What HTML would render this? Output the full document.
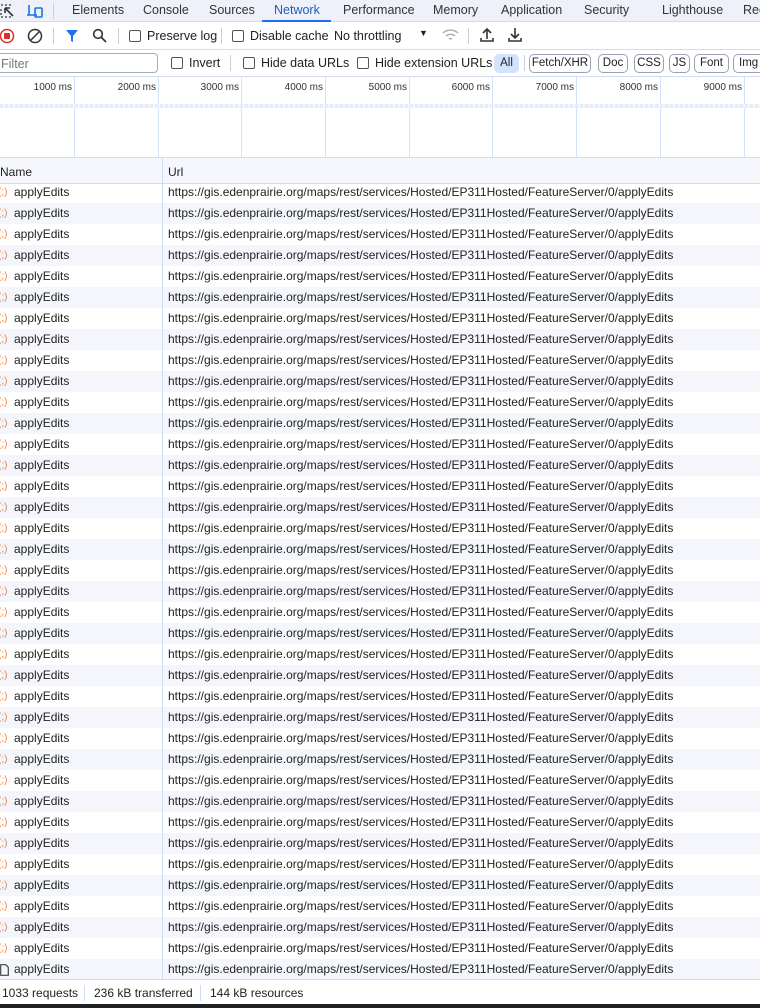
<!DOCTYPE html><html><head><style>
*{box-sizing:border-box;margin:0;padding:0}
body{width:760px;height:1008px;overflow:hidden;background:#fff;font-family:"Liberation Sans",sans-serif;font-size:12px;color:#1f1f1f;position:relative}
.abs{position:absolute}
.tabs{top:0;left:0;width:760px;height:22px;background:#eef1f9;border-bottom:1px solid #d3dcef}
.tab{position:absolute;top:3px;font-size:12.5px;color:#333}
.tb{top:22px;left:0;width:760px;height:28px;border-bottom:1px solid #d3dcef}
.cb{display:inline-block;width:12px;height:12px;border:1px solid #555;border-radius:2px;vertical-align:-2px;margin-right:6px}
.fb{top:50px;left:0;width:760px;height:27px;border-bottom:1px solid #d3dcef}
.pill{position:absolute;top:4px;height:19px;border:1px solid #9aa3b5;border-radius:5px;padding:2px 0;font-size:11.5px;color:#222;text-align:center}
.vl{position:absolute;top:77px;height:80px;width:1px;background:#d6e2fb}
.ms{position:absolute;top:82px;font-size:10px;color:#333;text-align:right;width:70px}
.hdr{top:157px;left:0;width:760px;height:27px;background:#f5f7fc;border-top:1px solid #cfdcf7;border-bottom:1px solid #cfdcf7}
.row{position:absolute;left:0;width:760px;height:21px;line-height:21px;white-space:nowrap}
.row.g{background:#f4f6fb}
.n{position:absolute;left:14px}
.u{position:absolute;left:168px}
.ic{position:absolute;left:-2px;top:0;color:#e8834a;font-size:10px}
.col{position:absolute;left:162px;top:157px;width:1px;height:822px;background:#cfdcf7}
.foot{top:979px;left:0;width:760px;height:25px;border-top:1px solid #cfdcf7;line-height:26px;font-size:12px}
</style></head><body>
<div id="rows"></div>
<div class="abs tabs">
<svg class="abs" style="left:0;top:3px" width="16" height="16"><path d="M1 2h2M5 2h2M9 2h2M1 6v2M1 10v2M1 14h2M5 14h2M9 14h2" stroke="#555" stroke-width="1.5"/><path d="M5 5l8 8M5 5h5M5 5v5" stroke="#333" stroke-width="1.6" fill="none"/></svg>
<svg class="abs" style="left:27px;top:3px" width="18" height="16"><path d="M2 2v10h8M2 12H0" stroke="#1a73e8" stroke-width="1.6" fill="none"/><rect x="8" y="5" width="7" height="9" rx="1" stroke="#1a73e8" stroke-width="1.6" fill="none"/></svg>
<div class="abs" style="left:53px;top:3px;width:1px;height:16px;background:#ccd"></div>
<span class="tab" style="left:72px">Elements</span>
<span class="tab" style="left:143px">Console</span>
<span class="tab" style="left:209px">Sources</span>
<span class="tab" style="left:274px;color:#1a5fc8">Network</span>
<div class="abs" style="left:262px;top:20px;width:69px;height:2px;background:#1a73e8"></div>
<span class="tab" style="left:343px">Performance</span>
<span class="tab" style="left:433px">Memory</span>
<span class="tab" style="left:501px">Application</span>
<span class="tab" style="left:584px">Security</span>
<span class="tab" style="left:662px">Lighthouse</span>
<span class="tab" style="left:743px">Rec</span>
</div>
<div class="abs tb">
<svg class="abs" style="left:0;top:6px" width="16" height="16"><circle cx="7" cy="8" r="6.5" fill="none" stroke="#d93025" stroke-width="1.5"/><rect x="4" y="5" width="6" height="6" rx="1" fill="#d93025"/></svg>
<svg class="abs" style="left:27px;top:6px" width="16" height="16"><circle cx="8" cy="8" r="6.5" fill="none" stroke="#333" stroke-width="1.5"/><path d="M3.5 12.5L12.5 3.5" stroke="#333" stroke-width="1.5"/></svg>
<div class="abs" style="left:53px;top:6px;width:1px;height:16px;background:#ccd"></div>
<svg class="abs" style="left:65px;top:7px" width="14" height="14"><path d="M1 1h12L8 7v6L6 12V7z" fill="#1a73e8"/></svg>
<svg class="abs" style="left:92px;top:6px" width="16" height="16"><circle cx="6" cy="6" r="4.3" fill="none" stroke="#333" stroke-width="1.6"/><path d="M9 9l5 5" stroke="#333" stroke-width="1.8"/></svg>
<div class="abs" style="left:118px;top:6px;width:1px;height:16px;background:#ccd"></div>
<span class="abs" style="left:129px;top:7px;font-size:12.5px"><span class="cb"></span>Preserve log</span>
<div class="abs" style="left:221px;top:6px;width:1px;height:16px;background:#ccd"></div>
<span class="abs" style="left:232px;top:7px;font-size:12.5px"><span class="cb"></span>Disable cache</span>
<span class="abs" style="left:334px;top:7px;font-size:12.5px">No throttling</span>
<span class="abs" style="left:419px;top:6px;font-size:9px">▼</span>
<svg class="abs" style="left:442px;top:6px" width="18" height="14"><path d="M1 5a11 11 0 0 1 15 0M4 8a7 7 0 0 1 9 0M7 11a3 3 0 0 1 3 0" stroke="#aaa" stroke-width="1.4" fill="none"/></svg>
<div class="abs" style="left:468px;top:6px;width:1px;height:16px;background:#ccd"></div>
<svg class="abs" style="left:480px;top:5px" width="14" height="16"><path d="M7 12V2M3 6l4-4 4 4M1 11v3h12v-3" stroke="#333" stroke-width="1.6" fill="none"/></svg>
<svg class="abs" style="left:508px;top:5px" width="14" height="16"><path d="M7 1v10M3 7l4 4 4-4M1 11v3h12v-3" stroke="#333" stroke-width="1.6" fill="none"/></svg>
</div>
<div class="abs fb">
<div class="abs" style="left:-8px;top:3px;width:166px;height:20px;border:1px solid #aab;border-radius:4px;padding:3px 8px;color:#777;font-size:12.5px">Filter</div>
<span class="abs" style="left:171px;top:6px;font-size:12.5px"><span class="cb"></span>Invert</span>
<div class="abs" style="left:230px;top:5px;width:1px;height:16px;background:#ccd"></div>
<span class="abs" style="left:243px;top:6px;font-size:12.5px"><span class="cb"></span>Hide data URLs</span>
<span class="abs" style="left:357px;top:6px;font-size:12.5px"><span class="cb"></span>Hide extension URLs</span>
<span class="pill" style="left:494px;width:25px;border-color:#d3e3fd;background:#d3e3fd">All</span>
<div class="abs" style="left:524px;top:5px;width:1px;height:16px;background:#ccd"></div>
<span class="pill" style="left:529px;width:62px">Fetch/XHR</span>
<span class="pill" style="left:598px;width:30px">Doc</span>
<span class="pill" style="left:634px;width:30px">CSS</span>
<span class="pill" style="left:669px;width:21px">JS</span>
<span class="pill" style="left:694px;width:35px">Font</span>
<span class="pill" style="left:733px;width:40px;text-align:left;padding-left:5px">Img</span>
</div>
<div class="vl" style="left:74px"></div><div class="vl" style="left:158px"></div><div class="vl" style="left:241px"></div><div class="vl" style="left:325px"></div><div class="vl" style="left:409px"></div><div class="vl" style="left:492px"></div><div class="vl" style="left:576px"></div><div class="vl" style="left:660px"></div><div class="vl" style="left:744px"></div>
<span class="ms" style="left:2px">1000 ms</span><span class="ms" style="left:86px">2000 ms</span><span class="ms" style="left:169px">3000 ms</span><span class="ms" style="left:253px">4000 ms</span><span class="ms" style="left:337px">5000 ms</span><span class="ms" style="left:420px">6000 ms</span><span class="ms" style="left:504px">7000 ms</span><span class="ms" style="left:588px">8000 ms</span><span class="ms" style="left:672px">9000 ms</span>
<div class="abs" style="left:0;top:104px;width:760px;height:4px;background:repeating-linear-gradient(90deg,#e3ecfb 0 3px,#f3f6fd 3px 5px)"></div>
<div class="abs hdr"><span class="abs" style="left:0;top:7px">Name</span><span class="abs" style="left:168px;top:7px">Url</span></div>
<div class="col"></div>
<div class="abs foot"><span class="abs" style="left:2px">1033 requests</span><div class="abs" style="left:84px;top:5px;width:1px;height:16px;background:#cfdcf7"></div><span class="abs" style="left:94px">236 kB transferred</span><div class="abs" style="left:200px;top:5px;width:1px;height:16px;background:#cfdcf7"></div><span class="abs" style="left:210px">144 kB resources</span></div>
<div class="abs" style="left:0;top:1004px;width:760px;height:4px;background:#202124"></div>
<script>
(function(){var h='';for(var i=0;i<38;i++){var t=i==0?182:203+(i-1)*21;var last=i==37;
h+='<div class="row'+(i%2?' g':'')+'" style="top:'+t+'px">'+(last?'<svg class="abs" style="left:0;top:5px" width="9" height="12"><path d="M0.7 0.7h5l2.6 2.6v8H0.7z" fill="none" stroke="#444" stroke-width="1.2"/></svg>':'<span class="ic">(;)</span>')+'<span class="n">applyEdits</span><span class="u">https://gis.edenprairie.org/maps/rest/services/Hosted/EP311Hosted/FeatureServer/0/applyEdits</span></div>';}
document.getElementById('rows').innerHTML=h;})();
</script>
</body></html>
